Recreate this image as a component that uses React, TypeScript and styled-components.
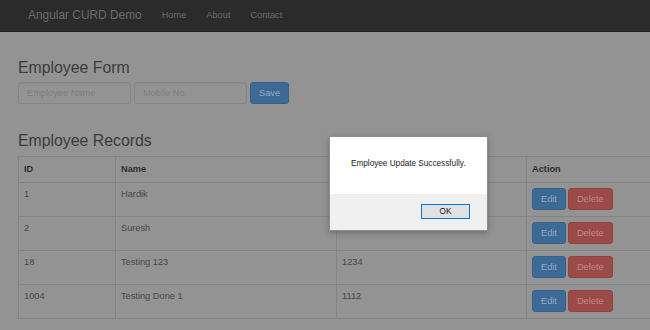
import React from "react";
import styled, { createGlobalStyle } from "styled-components";

const GlobalStyle = createGlobalStyle`
  html, body {
    margin: 0;
    padding: 0;
    background: #939393;
    overflow: hidden;
  }
  body {
    font-family: "Liberation Sans", Arial, sans-serif;
    font-size: 9.24px;
    color: #444;
  }
  * { box-sizing: border-box; }
`;

const Page = styled.div`
  position: relative;
  width: 650px;
  height: 330px;
  background: #939393;
  overflow: hidden;
`;

const NavBar = styled.nav`
  height: 32px;
  background: #2b2b2b;
  border-bottom: 1px solid #222;
  display: flex;
  align-items: flex-start;
  padding-left: 28px;
`;

const Brand = styled.a`
  font-size: 11.9px;
  line-height: 30px;
  color: #6c6c6c;
  padding-right: 20px;
  text-decoration: none;
`;

const NavList = styled.ul`
  display: flex;
  gap: 20px;
  list-style: none;
  margin: 0;
  padding: 0;
`;

const NavLink = styled.a`
  display: block;
  font-size: 9.24px;
  line-height: 30px;
  color: #6c6c6c;
  text-decoration: none;
`;

const Main = styled.main`
  padding: 0 0 0 18px;
  display: flex;
  flex-direction: column;
`;

const SectionTitle = styled.h3<{ $top: number; $bottom: number }>`
  margin: ${(p) => p.$top}px 0 ${(p) => p.$bottom}px;
  font-size: 15.84px;
  line-height: 17px;
  font-weight: normal;
  color: #3b3b3b;
`;

const FormRow = styled.form`
  display: flex;
  gap: 3px;
  height: 22px;
`;

const Input = styled.input`
  width: 113px;
  height: 22px;
  padding: 0 8px;
  border: 1px solid #868686;
  border-radius: 3px;
  background: #939393;
  font-family: inherit;
  font-size: 9.24px;
  color: #444;
  box-shadow: inset 0 1px 1px rgba(0, 0, 0, 0.04);
  &::placeholder {
    color: #7d7d7d;
  }
`;

const Button = styled.button<{ $variant: "primary" | "danger" }>`
  height: 22px;
  padding: 0 8px;
  font-family: inherit;
  font-size: 9.24px;
  line-height: 20px;
  border-radius: 3px;
  border: 1px solid
    ${(p) => (p.$variant === "primary" ? "#36618b" : "#8f4442")};
  background: ${(p) => (p.$variant === "primary" ? "#3d6a95" : "#9b4a47")};
  color: ${(p) => (p.$variant === "primary" ? "#93a9bf" : "#be8a88")};
  cursor: pointer;
`;

const Table = styled.table`
  width: 700px;
  table-layout: fixed;
  border-collapse: separate;
  border-spacing: 0;
  border-left: 1px solid #848484;
  border-top: 1px solid #848484;
`;

const Th = styled.th<{ $w: number }>`
  width: ${(p) => p.$w}px;
  padding: 6px 5px;
  line-height: 13px;
  text-align: left;
  font-weight: bold;
  font-size: 9.24px;
  color: #2f2f2f;
  border-right: 1px solid #848484;
  border-bottom: 1px solid #848484;
`;

const Td = styled.td`
  padding: 5px 5px 6px;
  line-height: 13px;
  vertical-align: top;
  color: #474747;
  border-right: 1px solid #848484;
  border-bottom: 1px solid #848484;
`;

const Actions = styled.div`
  display: flex;
  gap: 2px;
`;

const Dialog = styled.div`
  position: absolute;
  left: 329px;
  top: 136px;
  width: 159px;
  height: 95px;
  background: #fff;
  border: 1px solid #8c8c8c;
  box-shadow: 0 2px 6px rgba(0, 0, 0, 0.25);
  display: flex;
  flex-direction: column;
`;

const DialogBody = styled.div`
  height: 57px;
  padding: 22px 0 0 21px;
  font-size: 8.2px;
  line-height: 10px;
  color: #222;
`;

const DialogFooter = styled.div`
  flex: 1;
  background: #f0f0f0;
  display: flex;
  justify-content: flex-end;
  align-items: flex-start;
  padding: 10px 17px 0 0;
`;

const OkButton = styled.button`
  width: 49px;
  height: 15px;
  padding: 0;
  background: #e1e1e1;
  border: 1px solid #0078d7;
  font-family: inherit;
  font-size: 8.2px;
  line-height: 13px;
  color: #111;
`;

const rows = [
  { id: "1", name: "Hardik", mobile: "" },
  { id: "2", name: "Suresh", mobile: "" },
  { id: "18", name: "Testing 123", mobile: "1234" },
  { id: "1004", name: "Testing Done 1", mobile: "1112" },
];

export default function App() {
  return (
    <Page>
      <GlobalStyle />
      <NavBar>
        <Brand href="#">Angular CURD Demo</Brand>
        <NavList>
          <li><NavLink href="#">Home</NavLink></li>
          <li><NavLink href="#">About</NavLink></li>
          <li><NavLink href="#">Contact</NavLink></li>
        </NavList>
      </NavBar>
      <Main>
        <SectionTitle $top={27} $bottom={6}>Employee Form</SectionTitle>
        <FormRow onSubmit={(e) => e.preventDefault()}>
          <Input placeholder="Employee Name" />
          <Input placeholder="Mobile No." />
          <Button $variant="primary" type="submit">Save</Button>
        </FormRow>
        <SectionTitle $top={28} $bottom={7}>Employee Records</SectionTitle>
        <Table>
          <thead>
            <tr>
              <Th $w={97}>ID</Th>
              <Th $w={221}>Name</Th>
              <Th $w={190}>Mobile No.</Th>
              <Th $w={191}>Action</Th>
            </tr>
          </thead>
          <tbody>
            {rows.map((r) => (
              <tr key={r.id}>
                <Td>{r.id}</Td>
                <Td>{r.name}</Td>
                <Td>{r.mobile}</Td>
                <Td>
                  <Actions>
                    <Button $variant="primary">Edit</Button>
                    <Button $variant="danger">Delete</Button>
                  </Actions>
                </Td>
              </tr>
            ))}
          </tbody>
        </Table>
      </Main>
      <Dialog role="alertdialog">
        <DialogBody>Employee Update Successfully.</DialogBody>
        <DialogFooter>
          <OkButton>OK</OkButton>
        </DialogFooter>
      </Dialog>
    </Page>
  );
}
